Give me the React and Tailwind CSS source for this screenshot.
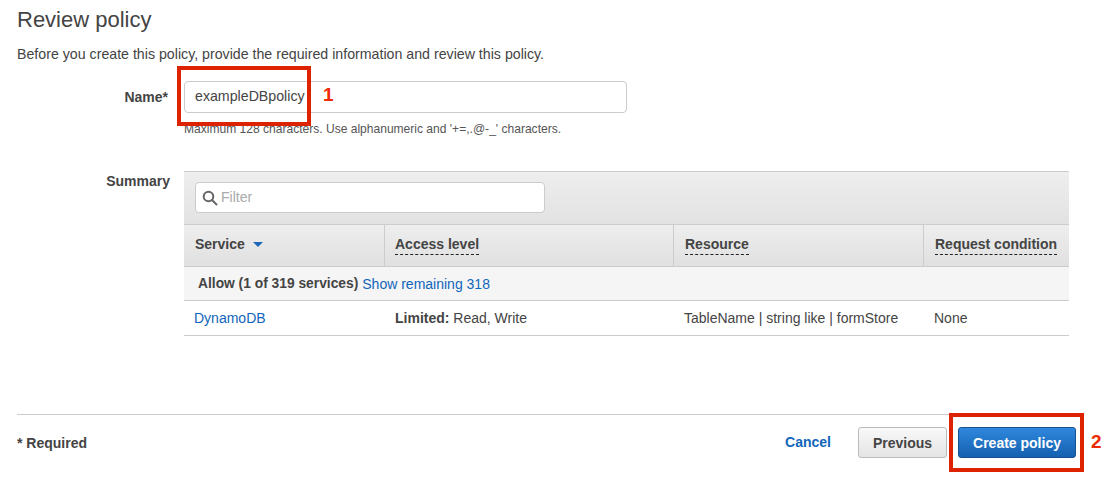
function HelpLabel({ children }) {
  return (
    <span className="border-b border-dashed border-[#222] pb-px text-[14px] font-bold text-[#444]">
      {children}
    </span>
  );
}

export default function App() {
  return (
    <div className="relative h-[489px] w-[1108px] overflow-hidden bg-white text-[14.2px] text-[#444] font-['Liberation_Sans',Arial,sans-serif]">
      <div className="px-[17px] pt-[7px]">
        <h1 className="text-[22px] leading-[26px] font-normal text-[#444]">Review policy</h1>
        <p className="mt-[12px] leading-[18px]">
          Before you create this policy, provide the required information and review this policy.
        </p>

        {/* Name */}
        <div className="mt-[18px] flex">
          <div className="w-[151px] pt-[7px] text-right text-[14px] leading-[18px] font-bold">Name*</div>
          <div className="ml-[16px]">
            <div className="flex h-[32px] w-[443px] items-center rounded-[4px] border border-[#ccc] bg-white pl-[10px]">
              exampleDBpolicy
            </div>
            <p className="mt-[8px] text-[12.05px] leading-[16px] text-[#555]">
              Maximum 128 characters. Use alphanumeric and '+=,.@-_' characters.
            </p>
          </div>
        </div>

        {/* Summary */}
        <div className="mt-[34px] flex">
          <div className="w-[153px] pt-[1px] text-right text-[14px] leading-[18px] font-bold">Summary</div>
          <div className="ml-[14px] w-[885px] text-[14px]">
            <div className="h-[53px] border-t border-[#ccc] bg-gradient-to-b from-[#eeeeee] to-[#e2e2e2] px-[11px] pt-[10px]">
              <div className="flex h-[31px] w-[350px] items-center rounded-[4px] border border-[#ccc] bg-white pl-[6px]">
                <svg width="16" height="16" viewBox="0 0 16 16" fill="none" stroke="#666" strokeWidth="2">
                  <circle cx="6.5" cy="6.5" r="4.8" />
                  <path d="M10 10l4.5 4.5" strokeLinecap="round" />
                </svg>
                <span className="ml-[3px] text-[#aaa]">Filter</span>
              </div>
            </div>
            <div className="flex h-[43px] border-y border-[#ccc] bg-gradient-to-b from-[#eeeeee] to-[#e0e0e0] leading-[18px]">
              <div className="flex w-[201px] items-center border-r border-[#ccc] pb-[4px] pl-[11px] font-bold">
                Service
                <svg className="mt-[2px] ml-[8px]" width="10" height="5" viewBox="0 0 10 5">
                  <path d="M0 0h10L5 5z" fill="#1b66b8" />
                </svg>
              </div>
              <div className="flex w-[289px] items-center border-r border-[#ccc] pb-[2px] pl-[10px]">
                <HelpLabel>Access level</HelpLabel>
              </div>
              <div className="flex w-[250px] items-center border-r border-[#ccc] pb-[2px] pl-[11px]">
                <HelpLabel>Resource</HelpLabel>
              </div>
              <div className="flex flex-1 items-center pb-[2px] pl-[11px]">
                <HelpLabel>Request condition</HelpLabel>
              </div>
            </div>
            <div className="flex h-[34px] items-center border-b border-[#ccc] bg-[#f5f5f5] pt-[2px] pl-[14px]">
              <span className="text-[13.8px] font-bold">Allow (1 of 319 services)</span>
              <span className="ml-[4px] text-[#1166bb]">Show remaining 318</span>
            </div>
            <div className="flex h-[35px] items-center border-b border-[#ccc]">
              <div className="w-[201px] pl-[10px] text-[#1166bb]">DynamoDB</div>
              <div className="w-[289px] pl-[10px]">
                <span className="font-bold">Limited:</span> Read, Write
              </div>
              <div className="w-[250px] pl-[10px]">TableName | string like | formStore</div>
              <div className="flex-1 pl-[10px]">None</div>
            </div>
          </div>
        </div>

        {/* Footer */}
        <div className="mt-[78px] flex h-[44px] w-[1052px] items-end border-t border-[#ccc]">
          <div className="mb-[6px] text-[14px] leading-[18px] font-bold">* Required</div>
          <div className="mr-[-7px] ml-auto flex items-center text-[14px]">
            <span className="mr-[27px] font-bold text-[#1166bb]">Cancel</span>
            <button className="h-[31px] w-[89px] rounded-[3px] border border-[#bbb] bg-gradient-to-b from-[#f9f9f9] to-[#e4e4e4] pt-px font-bold text-[#444]">
              Previous
            </button>
            <button className="ml-[11px] h-[31px] w-[118px] rounded-[3px] border border-[#15508f] bg-gradient-to-b from-[#2f88dd] to-[#1560b0] pt-px font-bold text-white">
              Create policy
            </button>
          </div>
        </div>
      </div>

      {/* Annotations */}
      <div className="absolute top-[66px] left-[177px] h-[60px] w-[134px] border-[4px] border-[#dd2200]" />
      <div className="absolute top-[84px] left-[323px] text-[19px] leading-[22px] font-bold text-[#ee2a00]">1</div>
      <div className="absolute top-[413px] left-[949px] h-[59px] w-[135px] border-[4px] border-[#dd2200]" />
      <div className="absolute top-[431px] left-[1091px] text-[19px] leading-[22px] font-bold text-[#ee2a00]">2</div>
    </div>
  );
}
